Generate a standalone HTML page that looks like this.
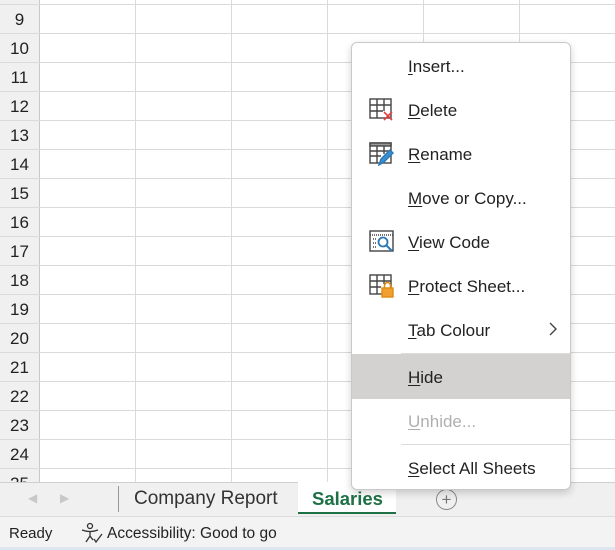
<!DOCTYPE html>
<html><head><style>
body{margin:0;width:615px;height:550px;overflow:hidden;background:#fff;font-family:"Liberation Sans",sans-serif;position:relative}
.hdr{position:absolute;left:0;top:0;width:39px;height:482px;background:#f0f0f0;border-right:1px solid #c8c8c8}
.rl{position:absolute;left:0;width:39px;height:29px;line-height:29px;text-align:center;font-size:17px;color:#222}
.hl{position:absolute;left:0;width:615px;height:1px;background:#dadada}
.vl{position:absolute;top:0;width:1px;height:482px;background:#dadada}
.tabs{position:absolute;left:0;top:482px;width:615px;height:33px;background:#f0f0f0;border-top:1px solid #d0d0d0}
.status{position:absolute;left:0;top:516px;width:615px;height:31px;background:#f3f3f3;border-top:1px solid #dcdcdc;font-size:15px;color:#222}
.menu{position:absolute;left:351px;top:42px;width:218px;height:446px;background:#fff;border:1px solid #c9c9c9;border-radius:6px;box-shadow:0 3px 8px rgba(0,0,0,.18)}
.it{position:absolute;left:56px;font-size:17px;color:#222;line-height:20px}
.it u{text-decoration:underline;text-underline-offset:2px}
.ic{position:absolute;left:17px}
.sep{position:absolute;left:49px;width:169px;height:1px;background:#dcdcdc}
</style></head><body>
<div class="hdr"></div>
<div class="vl" style="left:135px"></div><div class="vl" style="left:231px"></div><div class="vl" style="left:327px"></div><div class="vl" style="left:423px"></div><div class="vl" style="left:519px"></div>
<div class="hl" style="top:4px"></div><div class="hl" style="top:33px"></div><div class="hl" style="top:62px"></div><div class="hl" style="top:91px"></div><div class="hl" style="top:120px"></div><div class="hl" style="top:149px"></div><div class="hl" style="top:178px"></div><div class="hl" style="top:207px"></div><div class="hl" style="top:236px"></div><div class="hl" style="top:265px"></div><div class="hl" style="top:294px"></div><div class="hl" style="top:323px"></div><div class="hl" style="top:352px"></div><div class="hl" style="top:381px"></div><div class="hl" style="top:410px"></div><div class="hl" style="top:439px"></div><div class="hl" style="top:468px"></div>
<div class="rl" style="top:5px">9</div><div class="rl" style="top:34px">10</div><div class="rl" style="top:63px">11</div><div class="rl" style="top:92px">12</div><div class="rl" style="top:121px">13</div><div class="rl" style="top:150px">14</div><div class="rl" style="top:179px">15</div><div class="rl" style="top:208px">16</div><div class="rl" style="top:237px">17</div><div class="rl" style="top:266px">18</div><div class="rl" style="top:295px">19</div><div class="rl" style="top:324px">20</div><div class="rl" style="top:353px">21</div><div class="rl" style="top:382px">22</div><div class="rl" style="top:411px">23</div><div class="rl" style="top:440px">24</div><div class="rl" style="top:469px">25</div>
<div class="tabs">
<span style="position:absolute;left:28px;top:8px;color:#c8c8c8;font-size:12px">&#9664;</span>
<span style="position:absolute;left:60px;top:8px;color:#c8c8c8;font-size:12px">&#9654;</span>
<div style="position:absolute;left:118px;top:3px;width:1px;height:26px;background:#999"></div>
<span style="position:absolute;left:134px;top:5px;font-size:19px;color:#333">Company Report</span>
<div style="position:absolute;left:298px;top:-1px;width:98px;height:30px;background:#fff;border-bottom:2px solid #1e7145"></div>
<span style="position:absolute;left:312px;top:5px;font-size:18.5px;font-weight:bold;color:#1e7145">Salaries</span>
<div style="position:absolute;left:436px;top:6px;width:19px;height:19px;border:1px solid #888;border-radius:50%;text-align:center;line-height:19px;font-size:17px;color:#777">+</div>
</div>
<div class="status">
<span style="position:absolute;left:9px;top:8px">Ready</span>
<svg style="position:absolute;left:80px;top:5px" width="24" height="22" viewBox="0 0 24 22" fill="none" stroke="#333" stroke-width="1.3"><circle cx="10" cy="4" r="2.5"/><path d="M2 8 Q10 11 18 8 M10 10 V14 L6 20 M10 14 L13 18 M14 17 L16 20 L22 12"/></svg>
<span style="position:absolute;left:107px;top:8px;font-size:15.5px">Accessibility: Good to go</span>
</div>
<div style="position:absolute;left:0;top:547px;width:615px;height:3px;background:#dfe5f0"></div>
<div class="menu">
<div class="it" style="top:14px"><u>I</u>nsert...</div>
<svg class="ic" style="top:55px" width="26" height="24" viewBox="0 0 26 24" fill="none" stroke="#444" stroke-width="1.4"><rect x="1" y="1" width="21" height="19"/><path d="M1 7H22M1 13H14M8 1V20M15 1V13"/><path d="M15 14L23 22M23 14L15 22" stroke="#e04040" stroke-width="1.6"/></svg>
<div class="it" style="top:58px"><u>D</u>elete</div>
<svg class="ic" style="top:99px" width="26" height="24" viewBox="0 0 26 24" fill="none" stroke="#444" stroke-width="1.4"><rect x="1" y="1" width="21" height="20"/><rect x="1" y="1" width="21" height="3" fill="#999"/><path d="M1 9H22M1 14H12M8 4V21M15 4V12"/><path d="M10 23L12 17L21 8L24 11L15 20Z" fill="#3a8fd0" stroke="#2a78b8"/></svg>
<div class="it" style="top:102px"><u>R</u>ename</div>
<div class="it" style="top:146px"><u>M</u>ove or Copy...</div>
<svg class="ic" style="top:187px" width="26" height="24" viewBox="0 0 26 24" fill="none" stroke="#444" stroke-width="1.4"><rect x="1" y="1" width="23" height="20"/><path d="M1 5H24M4 9H7M4 13H7M4 17H7" stroke-dasharray="1 1"/><circle cx="14" cy="12" r="4.5" stroke="#2a78b8" stroke-width="1.8"/><path d="M17 15L23 21" stroke="#2a78b8" stroke-width="2"/></svg>
<div class="it" style="top:190px"><u>V</u>iew Code</div>
<svg class="ic" style="top:231px" width="26" height="24" viewBox="0 0 26 24" fill="none" stroke="#444" stroke-width="1.4"><rect x="1" y="1" width="21" height="19"/><path d="M1 7H22M1 13H12M8 1V20M15 1V10"/><rect x="13" y="14" width="11" height="9" fill="#f0a030" stroke="#e08a10"/><path d="M15.5 14V11.5A3 3 0 0 1 21.5 11.5V14" stroke="#e08a10" stroke-width="1.6"/></svg>
<div class="it" style="top:234px"><u>P</u>rotect Sheet...</div>
<div class="it" style="top:278px"><u>T</u>ab Colour</div>
<svg style="position:absolute;left:196px;top:278px" width="10" height="16" viewBox="0 0 10 16" fill="none" stroke="#444" stroke-width="1.4"><path d="M2 2L8 8L2 14"/></svg>
<div class="sep" style="top:310px"></div>
<div style="position:absolute;left:0;top:311px;width:218px;height:45px;background:#d3d2d0"></div>
<div class="it" style="top:325px"><u>H</u>ide</div>
<div class="it" style="top:369px;color:#b0b0b0"><u>U</u>nhide...</div>
<div class="sep" style="top:401px"></div>
<div class="it" style="top:416px"><u>S</u>elect All Sheets</div>
</div>
</body></html>
